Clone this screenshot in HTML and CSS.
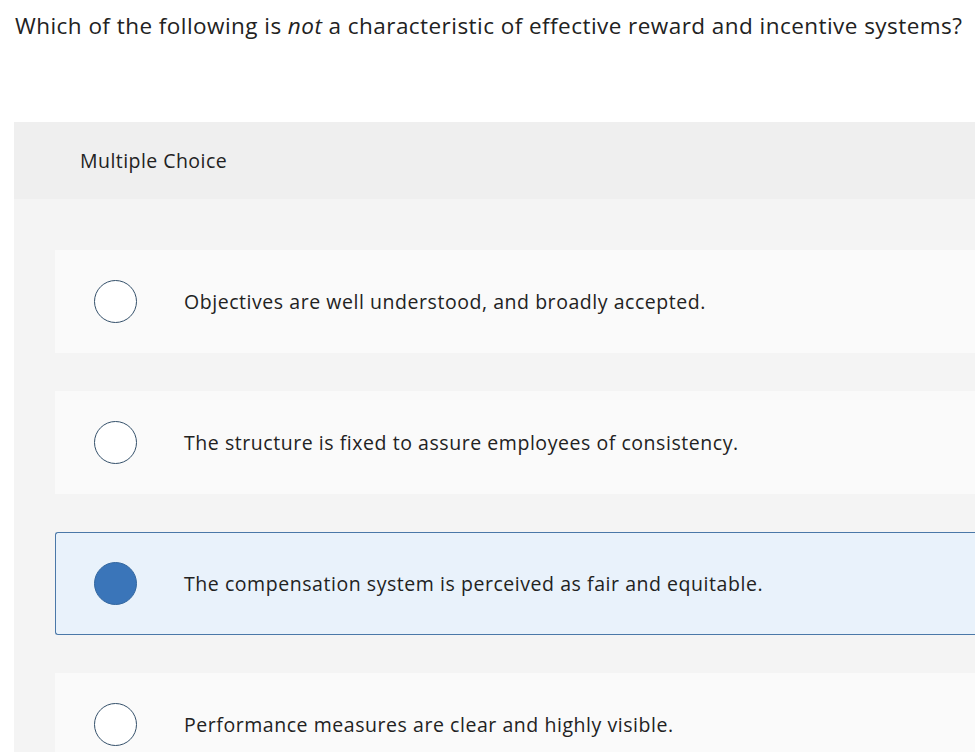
FILE: index.html
```html
<!DOCTYPE html>
<html>
<head>
<meta charset="utf-8">
<link rel="stylesheet" href="styles.css">
</head>
<body>
<p class="question">Which of the following is <em>not</em> a characteristic of effective reward and incentive systems?</p>
<div class="panel">
  <div class="panel-head">Multiple Choice</div>
  <div class="options">
    <div class="option"><span class="radio"></span><span class="label">Objectives are well understood, and broadly accepted.</span></div>
    <div class="option"><span class="radio"></span><span class="label">The structure is fixed to assure employees of consistency.</span></div>
    <div class="option selected"><span class="radio"></span><span class="label">The compensation system is perceived as fair and equitable.</span></div>
    <div class="option"><span class="radio"></span><span class="label">Performance measures are clear and highly visible.</span></div>
  </div>
</div>
</body>
</html>
```
FILE: styles.css
```css
html, body {
  margin: 0;
  padding: 0;
  background: #ffffff;
  overflow: hidden;
}
body {
  font-family: "Open Sans", Lato, sans-serif;
  color: #222222;
  width: 975px;
  height: 752px;
}
.question {
  margin: 0;
  padding: 12px 0 0 15px;
  font-size: 22.5px;
  line-height: 28px;
  letter-spacing: 0.45px;
  white-space: nowrap;
}
.question em {
  font-style: italic;
}
.panel {
  margin: 82px 0 0 14px;
  background: #f4f4f4;
  height: 640px;
}
.panel-head {
  background: #efefef;
  height: 77px;
  padding-left: 66px;
  display: flex;
  align-items: center;
  font-size: 19.5px;
  letter-spacing: 0.45px;
}
.options {
  padding: 51px 0 0 41px;
  display: flex;
  flex-direction: column;
  gap: 38px;
}
.option {
  height: 103px;
  background: #fafafa;
  display: flex;
  align-items: center;
  box-sizing: border-box;
  padding-left: 39px;
}
.option.selected {
  background: #e9f2fb;
  border: 1px solid #4a78a8;
  border-right: none;
  border-radius: 3px 0 0 3px;
  padding-left: 38px;
}
.radio {
  width: 43px;
  height: 43px;
  border-radius: 50%;
  box-sizing: border-box;
  border: 1.5px solid #34506a;
  background: #ffffff;
  flex: none;
}
.selected .radio {
  background: #3a75b9;
  border-color: #33679f;
}
.label {
  margin-left: 47px;
  font-size: 19.5px;
  letter-spacing: 0.55px;
}
```
